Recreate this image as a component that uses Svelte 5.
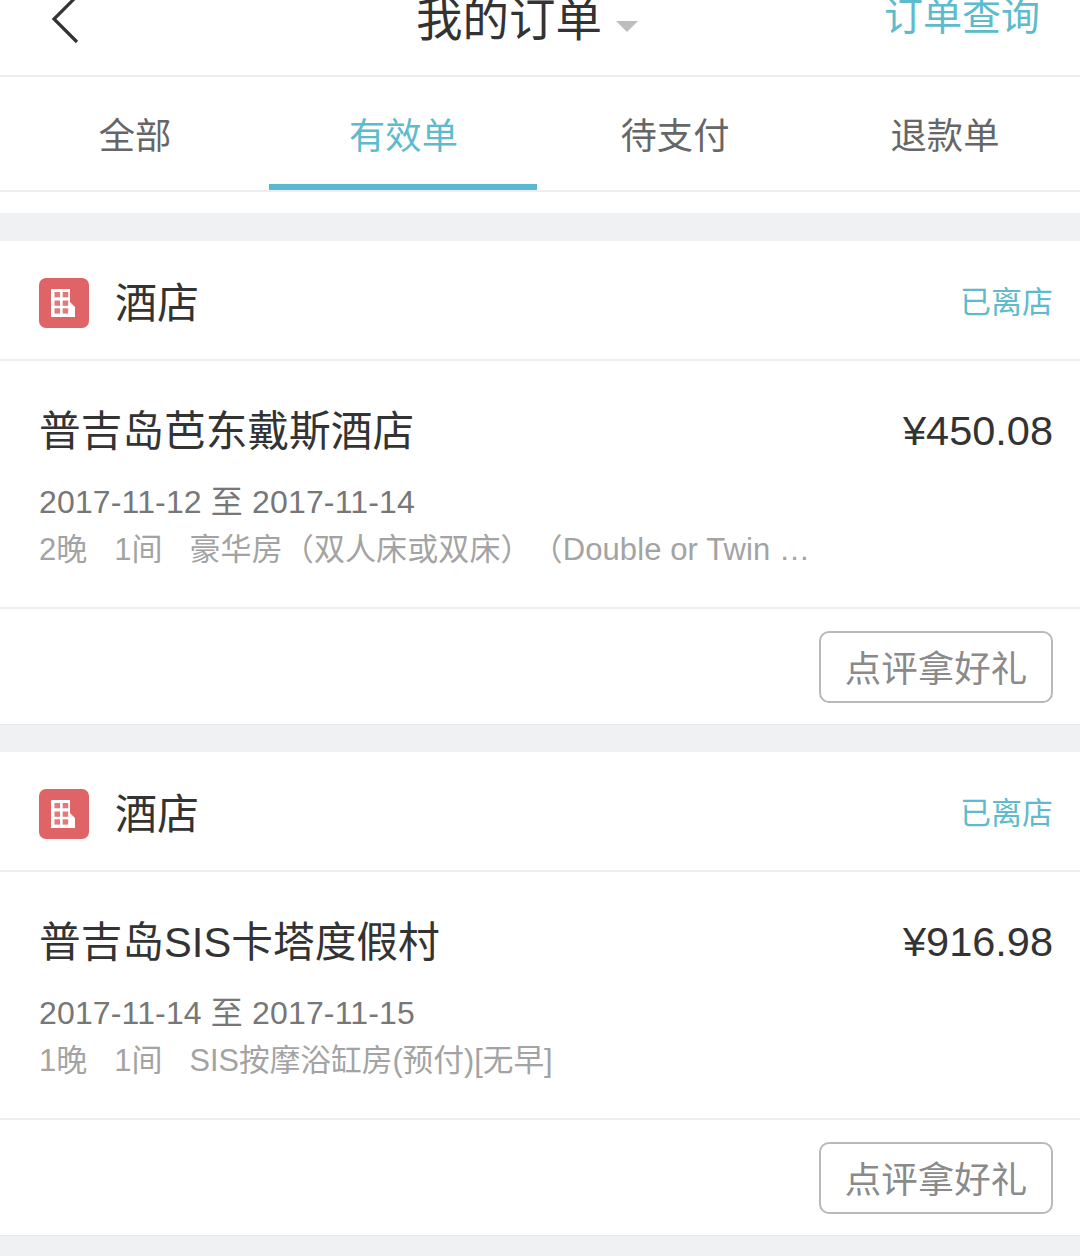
<script>
  const tabs = ['全部', '有效单', '待支付', '退款单'];
  const active = 1;
  const orders = [
    {
      type: '酒店',
      status: '已离店',
      name: '普吉岛芭东戴斯酒店',
      price: '¥450.08',
      dates: '2017-11-12 至 2017-11-14',
      nights: '2晚',
      rooms: '1间',
      room: '豪华房（双人床或双床）（Double or Twin …',
      tight: false
    },
    {
      type: '酒店',
      status: '已离店',
      name: '普吉岛SIS卡塔度假村',
      price: '¥916.98',
      dates: '2017-11-14 至 2017-11-15',
      nights: '1晚',
      rooms: '1间',
      room: 'SIS按摩浴缸房(预付)[无早]',
      tight: true
    }
  ];
</script>

<div class="page">
  <header class="nav">
    <svg class="back" width="30" height="46" viewBox="0 0 30 46">
      <path d="M26 -2 L3 21 L26 44" fill="none" stroke="#333" stroke-width="3.2" />
    </svg>
    <div class="title">我的订单<span class="caret"></span></div>
    <div class="query">订单查询</div>
  </header>

  <div class="tabs-wrap">
    <nav class="tabs">
      {#each tabs as tab, i}
        <div class="tab" class:on={i === active}>{tab}</div>
      {/each}
    </nav>
  </div>

  {#each orders as order}
    <section class="card">
      <div class="head">
        <svg class="hotel" width="50" height="50" viewBox="0 0 50 50">
          <rect width="50" height="50" rx="7" fill="#e06466" />
          <path d="M12 12 a1 1 0 0 1 1 -1 H31 V24 L36 29 V39 H12 Z" fill="#fff" />
          <g fill="#e4797a">
            <rect x="15.5" y="14" width="5.5" height="5.3" />
            <rect x="23.7" y="14" width="5.5" height="5.3" />
            <rect x="15.5" y="22.5" width="5.5" height="5.3" />
            <rect x="23.7" y="22.5" width="5.5" height="5.3" />
            <rect x="15.5" y="30.3" width="5.5" height="5.3" />
            <rect x="23.7" y="30.3" width="5.5" height="5.3" />
          </g>
        </svg>
        <span class="type">{order.type}</span>
        <span class="status">{order.status}</span>
      </div>
      <div class="body">
        <div class="row">
          <h2>{order.name}</h2>
          <div class="price">{order.price}</div>
        </div>
        <div class="dates">{order.dates}</div>
        <div class="info">
          <span>{order.nights}</span><span>{order.rooms}</span><span class="room" class:tight={order.tight}>{order.room}</span>
        </div>
      </div>
      <div class="foot">
        <div class="btn">点评拿好礼</div>
      </div>
    </section>
  {/each}
</div>

<style>
  :global(body) { background: #fff; }

  .page {
    width: 1080px;
    height: 1256px;
    overflow: hidden;
    background: #f0f1f3;
    font-family: "Liberation Sans", "Noto Sans CJK SC", sans-serif;
  }

  .nav {
    height: 75px;
    background: #fff;
    border-bottom: 2px solid #eeeeee;
    position: relative;
    display: flex;
    justify-content: center;
    overflow: hidden;
  }
  .back { position: absolute; left: 51px; top: -2px; }
  .title {
    font-size: 46.5px;
    line-height: 40px;
    color: #333;
    display: flex;
    align-items: center;
    margin-right: 26px;
    height: 40px;
  }
  .caret {
    width: 0;
    height: 0;
    margin: 12px 0 0 14px;
    border-left: 11px solid transparent;
    border-right: 11px solid transparent;
    border-top: 11px solid #bdbdbd;
  }
  .query {
    position: absolute;
    right: 40px;
    top: 0;
    line-height: 34px;
    font-size: 39px;
    color: #5ebbcd;
  }

  .tabs-wrap {
    background: #fff;
    padding-bottom: 21px;
  }
  .tabs {
    display: grid;
    grid-template-columns: repeat(4, 1fr);
    height: 113px;
    border-bottom: 2px solid #eeeeee;
    box-sizing: content-box;
  }
  .tab {
    font-size: 36.3px;
    color: #666;
    text-align: center;
    line-height: 120px;
    height: 113px;
    box-sizing: border-box;
  }
  .tab.on {
    color: #5ebbcd;
    border-bottom: 6px solid #5ab8d2;
    margin: 0 3px 0 -1px;
    text-indent: 1px;
  }

  .card {
    background: #fff;
    margin-top: 28px;
    border-bottom: 1px solid #e9e9e9;
  }
  .card + .card { margin-top: 27px; }

  .head {
    height: 118px;
    box-sizing: content-box;
    border-bottom: 2px solid #eeeeee;
    display: flex;
    align-items: center;
    padding: 0 27px 0 39px;
  }
  .hotel { flex: none; margin-top: 6px; }
  .type {
    font-size: 42px;
    color: #333;
    margin-left: 26px;
    margin-bottom: 2px;
  }
  .status {
    margin-left: auto;
    font-size: 31px;
    color: #5ebbcd;
    margin-bottom: 2px;
  }

  .body {
    height: 246px;
    border-bottom: 2px solid #eeeeee;
    padding: 0 27px 0 39px;
  }
  .row {
    display: flex;
    justify-content: space-between;
    align-items: center;
    padding-top: 44px;
  }
  h2 {
    margin: 0;
    font-size: 41.7px;
    line-height: 52px;
    font-weight: 400;
    color: #333;
  }
  .price {
    font-size: 41.5px;
    line-height: 52px;
    color: #333;
    padding-bottom: 2px;
  }
  .dates {
    margin-top: 23px;
    font-size: 32px;
    line-height: 40px;
    letter-spacing: 0.15px;
    color: #777;
  }
  .info {
    margin-top: 8px;
    font-size: 31px;
    line-height: 40px;
    color: #a3a3a3;
    display: flex;
    gap: 27px;
  }
  .room {
    text-spacing-trim: space-all;
    letter-spacing: 0.1px;
  }
  .room.tight {
    font-size: 30.7px;
    letter-spacing: 0;
  }

  .foot {
    height: 115px;
    display: flex;
    justify-content: flex-end;
    align-items: flex-start;
    padding: 22px 27px 0 0;
    box-sizing: border-box;
  }
  .btn {
    width: 234px;
    height: 72px;
    box-sizing: border-box;
    border: 2px solid #b9b9b9;
    border-radius: 10px;
    font-size: 36.5px;
    line-height: 73px;
    color: #8a8a8a;
    text-align: center;
  }
</style>
